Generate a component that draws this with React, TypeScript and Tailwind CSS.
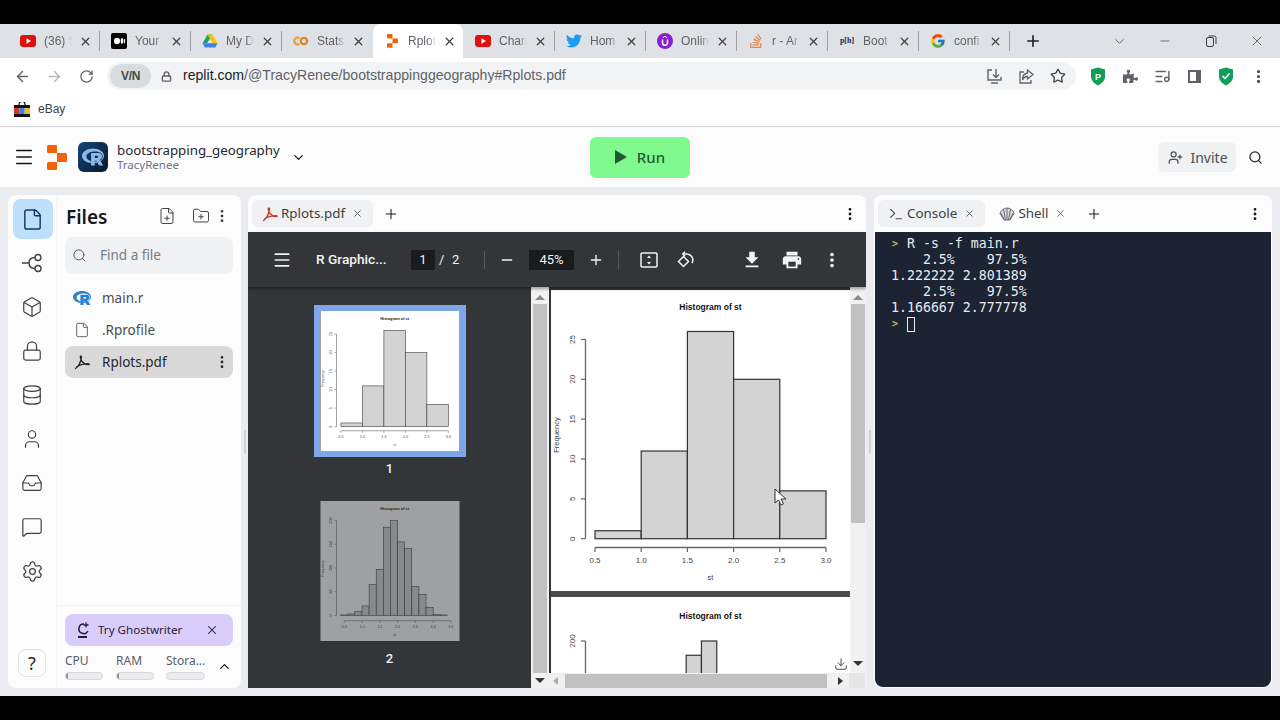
import {
  ArrowLeft,
  ArrowRight,
  Box,
  ChevronDown,
  ChevronUp,
  Database,
  Download,
  EllipsisVertical,
  File,
  FilePlus,
  FolderPlus,
  Inbox,
  ListMusic,
  Lock,
  Menu,
  MessageSquare,
  Minus,
  Plus,
  RotateCw,
  Search,
  Settings,
  Star,
  Terminal,
  User,
  UserPlus,
  X,
} from "lucide-react";
import { FaPuzzlePiece, FaStackOverflow, FaTwitter } from "react-icons/fa";
import { FcGoogle } from "react-icons/fc";
import { MdFileDownload, MdMoreVert, MdPrint } from "react-icons/md";
import { SiR } from "react-icons/si";

const uiFont = { fontFamily: '"Noto Sans", sans-serif' };

function YouTubeIcon() {
  return (
    <svg width="16" height="16" viewBox="0 0 16 16">
      <rect x="0" y="2" width="16" height="12" rx="3" fill="#e01010" />
      <path d="M6.5 5.2 11 8l-4.5 2.8z" fill="#fff" />
    </svg>
  );
}

function MediumIcon() {
  return (
    <svg width="16" height="16" viewBox="0 0 16 16">
      <rect width="16" height="16" rx="2" fill="#000" />
      <ellipse cx="6" cy="8" rx="3" ry="3.2" fill="#fff" />
      <ellipse cx="11" cy="8" rx="1.4" ry="3" fill="#fff" />
      <ellipse cx="13.6" cy="8" rx=".6" ry="2.6" fill="#fff" />
    </svg>
  );
}

function DriveIcon() {
  return (
    <svg width="17" height="16" viewBox="0 0 17 16">
      <path d="M6 1h5l-5.5 9.5H.5z" fill="#1fa463" />
      <path d="M11 1l5.5 9.5h-5L6 1z" fill="#ffc107" />
      <path d="M.5 10.5h16L14 15H3z" fill="#3f7fe8" />
    </svg>
  );
}

function ColabIcon() {
  return (
    <svg width="17" height="16" viewBox="0 0 17 16" fill="none" stroke="#e8a33a" strokeWidth="2.4">
      <path d="M7 5a3.6 3.6 0 1 0 0 6" />
      <circle cx="11.6" cy="8" r="3.4" stroke="#d98a1f" />
    </svg>
  );
}

function ReplitLogo({ size }: { size: number }) {
  return (
    <svg width={size} height={size * 1.25} viewBox="0 0 20 25" fill="#f26207">
      <path d="M0 1.5A1.5 1.5 0 0 1 1.5 0H9a1 1 0 0 1 1 1v7H1.5A1.5 1.5 0 0 1 0 6.500z" />
      <path d="M10 8h8.500A1.500 1.500 0 0 1 20 9.500v6a1.500 1.500 0 0 1-1.500 1.500H10z" />
      <path d="M1.500 17H10v7a1 1 0 0 1-1 1H1.500A1.500 1.500 0 0 1 0 23.500v-5A1.500 1.500 0 0 1 1.500 17z" />
    </svg>
  );
}

function UdemyIcon() {
  return (
    <svg width="16" height="16" viewBox="0 0 16 16">
      <circle cx="8" cy="8" r="8" fill="#8a1fd0" />
      <path d="M5.500 6.500v3.300a2.500 2.500 0 0 0 5 0V6.500" fill="none" stroke="#fff" strokeWidth="1.500" />
      <path d="M5.800 4.800 8 3.200l2.200 1.600" fill="none" stroke="#fff" strokeWidth="1" />
    </svg>
  );
}

function AcrobatIcon({ color, size = 16 }: { color: string; size?: number }) {
  return (
    <svg width={size} height={size} viewBox="0 0 16 16" fill="none" stroke={color} strokeWidth="1.300" strokeLinecap="round">
      <path d="M1.500 14.500C4 13 6.500 8.500 7.500 3.500c.3-1.800-1.200-2-1.200-.6 0 3.500 3 7.300 8.200 7.800.9 0 .9-1-.2-1-3.500-.3-8 1-11.500 2.800" />
    </svg>
  );
}

function ShellIcon() {
  return (
    <svg width="16" height="16" viewBox="0 0 16 16" fill="none" stroke="#6b7076" strokeWidth="1">
      <path d="M5 14h6l4-6.500C14 4 11 2 8 2S2 4 1 7.500z" fill="#d8dadd" />
      <path d="M8 14V2M6.500 14 4.500 3M9.500 14l2-11M5.500 14 1.500 6.500M10.500 14l4-7.500" />
    </svg>
  );
}

function BranchIcon() {
  return (
    <svg width="24" height="24" viewBox="0 0 24 24" fill="none" stroke="#3d4145" strokeWidth="1.400">
      <path d="M2 12h7M9 12c0-3 1-5.500 6-5.500M9 12c0 3 1 5.500 6 5.500" />
      <circle cx="18" cy="6.500" r="3" />
      <circle cx="18" cy="17.500" r="3" />
    </svg>
  );
}

function GhostwriterIcon() {
  return (
    <svg width="16" height="18" viewBox="0 0 16 18" fill="none" stroke="#1f1f3a" strokeWidth="1.500">
      <path d="M9 3a4.800 4.800 0 1 0 4 7" />
      <path d="M11 1.500v5M8.500 4h5" strokeWidth="1.300" />
      <path d="M3 16h9" strokeWidth="2" />
    </svg>
  );
}

function ShieldIcon({ check }: { check?: boolean }) {
  return (
    <svg width="16" height="19" viewBox="0 0 16 19">
      <path d="M8 .5 15 2.500v7c0 4-3 7-7 9-4-2-7-5-7-9v-7z" fill="#0f9d58" />
      {check ? (
        <path d="m4.500 9 2.500 2.500 4.500-5" fill="none" stroke="#fff" strokeWidth="1.600" />
      ) : (
        <text x="8" y="12.500" textAnchor="middle" fontSize="9" fontWeight="700" fill="#fff" fontFamily="Liberation Sans">
          P
        </text>
      )}
    </svg>
  );
}

const chromeTabs = [
  { title: "(36) S", icon: <YouTubeIcon /> },
  { title: "Your", icon: <MediumIcon /> },
  { title: "My D", icon: <DriveIcon /> },
  { title: "Stats", icon: <ColabIcon /> },
  { title: "Rplot", icon: <ReplitLogo size={11} />, active: true },
  { title: "Chan", icon: <YouTubeIcon /> },
  { title: "Hom", icon: <FaTwitter size={16} color="#1d9bf0" /> },
  { title: "Onlin", icon: <UdemyIcon /> },
  { title: "r - Ar", icon: <FaStackOverflow size={16} color="#e8874a" /> },
  {
    title: "Boot",
    icon: (
      <span className="text-[8px] font-bold text-[#1a2a5a]" style={{ fontFamily: '"Liberation Serif", serif' }}>
        p[h]
      </span>
    ),
  },
  { title: "confi", icon: <FcGoogle size={16} /> },
];

function ChromeTab({ title, icon, active, hideSep }: { title: string; icon: React.ReactNode; active?: boolean; hideSep?: boolean }) {
  return (
    <>
      <div className={`flex h-[34px] w-[90px] shrink-0 items-center pl-[11px] ${active ? "rounded-t-lg bg-white" : ""}`}>
        <div className="flex w-4 shrink-0 justify-center">{icon}</div>
        <div className="ml-2 w-[28px] overflow-hidden whitespace-nowrap text-[12px] text-[#5f6368] [mask-image:linear-gradient(to_right,black_70%,transparent)]">
          {title}
        </div>
        <X size={13} strokeWidth={2.2} className="ml-[7px] shrink-0 text-[#3c4043]" />
      </div>
      <div className={`h-5 w-px shrink-0 ${hideSep ? "bg-transparent" : "bg-[#9aa0a6]"}`} />
    </>
  );
}

function ChromeBar() {
  return (
    <div className="flex h-[34px] shrink-0 items-center bg-[#dee1e6] pl-[9px] text-[#3c4043]" style={{ fontFamily: '"Liberation Sans", sans-serif' }}>
      {chromeTabs.map((t, i) => (
        <ChromeTab key={i} title={t.title} icon={t.icon} active={t.active} hideSep={t.active || chromeTabs[i + 1]?.active} />
      ))}
      <Plus size={18} strokeWidth={2.2} className="ml-[14px] text-[#202124]" />
      <ChevronDown size={15} strokeWidth={1.2} className="ml-[70px]" />
      <Minus size={14} strokeWidth={1.2} className="ml-[31px]" />
      <svg width="12" height="12" viewBox="0 0 12 12" fill="none" stroke="#3c4043" className="ml-[33px]">
        <rect x="1.500" y="2.500" width="7" height="9" rx="1.500" />
        <path d="M3.500 1h6a1.500 1.500 0 0 1 1.500 1.500V9" />
      </svg>
      <X size={16} strokeWidth={1.1} className="ml-[32px]" />
    </div>
  );
}

function UrlBar() {
  return (
    <div className="flex h-[34px] shrink-0 items-center bg-white pl-[6px] pt-[2px] text-[#5f6368]">
      <div className="flex w-8 justify-center"><ArrowLeft size={17} /></div>
      <div className="flex w-8 justify-center"><ArrowRight size={17} className="text-[#b4b7bb]" /></div>
      <div className="flex w-8 justify-center"><RotateCw size={15} strokeWidth={2} /></div>
      <div className="ml-[5px] flex h-7 w-[969px] items-center rounded-full bg-[#f1f3f4] pl-[3px] pr-[2px]">
        <div className="flex h-6 w-[41px] items-center justify-center rounded-full bg-[#d9dcdf] text-[12px] font-bold tracking-tight text-[#45494d]" style={{ fontFamily: '"Liberation Sans", sans-serif' }}>
          V/N
        </div>
        <Lock size={11} strokeWidth={3} className="ml-[10px] text-[#5f6368]" />
        <div className="ml-[11px] text-[14.100px]" style={{ fontFamily: '"Liberation Sans", sans-serif' }}>
          <span className="text-[#202124]">replit.com</span>
          <span className="text-[#5f6368]">/@TracyRenee/bootstrappinggeography#Rplots.pdf</span>
        </div>
        <div className="ml-auto flex w-8 justify-center">
          <svg width="17" height="17" viewBox="0 0 17 17" fill="none" stroke="#5f6368" strokeWidth="1.400">
            <path d="M6 2H2v10h13V9M10 1v8M7 6.500 10 9.500l3-3M5 15h7" />
          </svg>
        </div>
        <div className="flex w-8 justify-center">
          <svg width="17" height="17" viewBox="0 0 17 17" fill="none" stroke="#5f6368" strokeWidth="1.300">
            <path d="M6 4H2v11h11v-3M9.500 2l5.500 4.500L9.500 11V8.500C7 8.500 5.500 9.500 4.500 12c0-4 2-6.500 5-7z" />
          </svg>
        </div>
        <div className="flex w-8 justify-center"><Star size={16} className="text-[#45494d]" /></div>
      </div>
      <div className="ml-[6px] flex items-center text-[#5f6368]">
        <div className="flex w-8 justify-center"><ShieldIcon /></div>
        <div className="flex w-8 justify-center"><FaPuzzlePiece size={15} /></div>
        <div className="flex w-8 justify-center"><ListMusic size={17} /></div>
        <div className="flex w-8 justify-center"><div className="h-[13px] w-[13px] border-[2.500px] border-r-[5px] border-[#5f6368]" /></div>
        <div className="flex w-8 justify-center"><ShieldIcon check /></div>
        <div className="flex w-8 justify-center"><EllipsisVertical size={17} strokeWidth={2.500} className="text-[#45494d]" /></div>
      </div>
    </div>
  );
}

function BookmarkBar() {
  return (
    <div className="flex h-[35px] shrink-0 items-center border-b border-[#d4d5d7] bg-white pl-[14px]">
      <svg width="16" height="15" viewBox="0 0 16 15">
        <path d="M5 4V2.500a3 3 0 0 1 6 0V4" fill="none" stroke="#111" strokeWidth="1.200" />
        <rect y="3" width="16" height="3" fill="#111" />
        <rect y="6" width="5.300" height="6" fill="#d3352b" />
        <rect x="5.300" y="6" width="5.400" height="6" fill="#3f7fe8" />
        <rect x="10.700" y="6" width="5.300" height="6" fill="#e0c21c" />
        <rect y="12" width="16" height="3" fill="#111" />
      </svg>
      <span className="ml-2 text-[12px] text-[#3c4043]" style={{ fontFamily: '"Liberation Sans", sans-serif' }}>eBay</span>
    </div>
  );
}

function ReplHeader() {
  return (
    <div className="grid h-[60px] shrink-0 grid-cols-[1fr_auto_1fr] items-center bg-[#fcfcfc] px-4">
      <div className="-ml-px flex items-center">
        <Menu size={22} strokeWidth={1.600} className="-mx-[2px] text-[#14161a]" />
        <div className="ml-[14px]"><ReplitLogo size={20} /></div>
        <div className="ml-[11px] flex h-[30px] w-[30px] items-center justify-center rounded-md bg-gradient-to-br from-[#15477a] to-[#08172b]">
          <SiR size={22} color="#8bb9e8" />
        </div>
        <div className="ml-[9px] flex w-[163px] flex-col whitespace-nowrap">
          <span className="text-[13.300px] leading-[15px] text-[#25282e]">bootstrapping_geography</span>
          <span className="text-[11.500px] leading-[13px] text-[#70757c]">TracyRenee</span>
        </div>
        <ChevronDown size={15} strokeWidth={2} className="ml-[11px] text-[#14161a]" />
      </div>
      <div className="flex h-[41px] w-[100px] items-center justify-center gap-[10px] rounded-md bg-[#80f98f] text-[15px] font-medium text-[#1f5a32]">
        <svg width="12" height="14" viewBox="0 0 12 14" fill="#1f5a32"><path d="M0 0v14l12-7z" /></svg>
        Run
      </div>
      <div className="flex items-center justify-end">
        <div className="flex h-[30px] w-[78px] items-center justify-center gap-[7px] rounded-md bg-[#f0f1f2] pl-[2px] text-[14px] text-[#4a4e55]">
          <UserPlus size={15} />
          Invite
        </div>
        <Search size={15} strokeWidth={2} className="ml-[12px] mr-px text-[#25282e]" />
      </div>
    </div>
  );
}

const railIcons = [
  <BranchIcon />,
  <Box size={22} strokeWidth={1.300} />,
  <Lock size={22} strokeWidth={1.300} />,
  <Database size={22} strokeWidth={1.300} />,
  <User size={22} strokeWidth={1.300} />,
  <Inbox size={22} strokeWidth={1.300} />,
  <MessageSquare size={22} strokeWidth={1.300} />,
  <Settings size={23} strokeWidth={1.300} />,
];

function Meter({ label, width, used }: { label: string; width: string; used?: boolean }) {
  return (
    <div className={`flex flex-col ${width}`}>
      <span className="whitespace-nowrap text-[12px] leading-[16px] text-[#5a5f66]">{label}</span>
      <div className="mt-[3px] h-[8px] w-full overflow-hidden rounded-full border border-[#d6d7da] bg-[#ebecef]">
        {used && <div className="h-full w-[2px] bg-[#8a8d92]" />}
      </div>
    </div>
  );
}

function FilesPanel() {
  return (
    <div className="flex w-[233px] shrink-0 overflow-hidden rounded-lg bg-[#fcfcfc]">
      <div className="flex w-[49px] shrink-0 flex-col items-center gap-1 border-r border-[#f4f4f5] pt-1 text-[#3d4145]">
        <div className="ml-px flex h-10 w-10 items-center justify-center rounded-lg bg-[#bfe0fd]">
          <File size={23} strokeWidth={1.500} className="text-[#0b3b66]" />
        </div>
        {railIcons.map((icon, i) => (
          <div key={i} className="flex h-10 w-10 items-center justify-center">{icon}</div>
        ))}
        <div className="mb-[11px] mt-auto flex h-7 w-7 items-center justify-center rounded-lg border border-[#e2e3e6] text-[18px] text-[#25282e]">?</div>
      </div>
      <div className="flex min-w-0 flex-1 flex-col">
        <div className="flex h-[42px] shrink-0 items-center pl-[9px]">
          <span className="mt-[2px] w-[42px] shrink-0 text-[19px] font-semibold text-[#14161a]">Files</span>
          <FilePlus size={18} strokeWidth={1.300} className="ml-[50px] text-[#3d4145]" />
          <FolderPlus size={18} strokeWidth={1.300} className="ml-[16px] text-[#3d4145]" />
          <EllipsisVertical size={16} strokeWidth={2.200} className="ml-[4px] text-[#3d4145]" />
        </div>
        <div className="mx-2 flex h-[37px] shrink-0 items-center rounded-lg bg-[#f0f1f2] pl-[7px] text-[13.500px] leading-[21px] text-[#777b82]">
          <Search size={15} strokeWidth={1.500} className="text-[#4a4e55]" />
          <span className="ml-[13px]">Find a file</span>
        </div>
        <div className="mx-2 mt-2 flex flex-col text-[13.500px] leading-[21px] text-[#4a4e55]">
          <div className="flex h-8 items-center pl-[8px]">
            <SiR size={18} color="#2a7fd0" />
            <span className="ml-[11px]">main.r</span>
          </div>
          <div className="flex h-8 items-center pl-[9px]">
            <File size={16} strokeWidth={1.300} />
            <span className="ml-[12px]">.Rprofile</span>
          </div>
          <div className="flex h-8 items-center rounded-lg bg-[#d9d9da] pl-[9px] text-[#25282e]">
            <AcrobatIcon color="#25282e" />
            <span className="ml-[12px]">Rplots.pdf</span>
            <EllipsisVertical size={16} strokeWidth={2.200} className="ml-auto mr-[3px]" />
          </div>
        </div>
        <div className="mt-auto border-t border-[#f2f2f3] px-2 pb-2 pt-[8px]">
          <div className="flex h-8 items-center rounded-lg bg-[#d8ccfb] pl-[10px] text-[11.600px] text-[#1f1f3a]">
            <GhostwriterIcon />
            <span className="ml-[7px]">Try Ghostwriter</span>
            <X size={14} strokeWidth={1.800} className="ml-auto mr-[14px]" />
          </div>
          <div className="mt-[7px] flex items-center">
            <Meter label="CPU" width="w-[38px]" used />
            <div className="ml-[13px]"><Meter label="RAM" width="w-[38px]" used /></div>
            <div className="ml-[12px]"><Meter label="Stora..." width="w-[39px]" /></div>
            <ChevronUp size={15} strokeWidth={2} className="ml-[12px] text-[#14161a]" />
          </div>
        </div>
      </div>
    </div>
  );
}

type HistogramProps = {
  bars: number[][];
  xTicks: string[];
  yTicks: number[];
  xOf: (v: number) => number;
  yOf: (v: number) => number;
  className?: string;
};

function Histogram({ bars, xTicks, yTicks, xOf, yOf, className }: HistogramProps) {
  const xFirst = xOf(Number(xTicks[0]));
  const xLast = xOf(Number(xTicks[xTicks.length - 1]));
  const y0 = yOf(yTicks[0]);
  const yMax = yOf(yTicks[yTicks.length - 1]);
  return (
    <svg viewBox="0 0 299 301" className={className} fontFamily="Liberation Sans" fill="#444">
      <rect width="299" height="301" fill="#fff" />
      <text x="159.500" y="19.500" textAnchor="middle" fontSize="8.500" fontWeight="700" fill="#111">Histogram of st</text>
      {bars.map(([a, b, n]) => (
        <rect key={a} x={xOf(a)} y={yOf(n)} width={xOf(b) - xOf(a)} height={y0 - yOf(n)} fill="#d3d3d3" stroke="#333" strokeWidth="1.200" />
      ))}
      <path d={`M34.500 ${y0}V${yMax}`} stroke="#666" strokeWidth="1.300" fill="none" />
      {yTicks.map((t) => (
        <g key={t}>
          <path d={`M30 ${yOf(t)}H34.500`} stroke="#666" strokeWidth="1.200" />
          <text x="24" y={yOf(t)} fontSize="8" textAnchor="middle" transform={`rotate(-90 24 ${yOf(t)})`}>{t}</text>
        </g>
      ))}
      <text x="8" y="145" fontSize="7.500" textAnchor="middle" transform="rotate(-90 8 145)">Frequency</text>
      <path d={`M${xFirst} 257.500H${xLast}`} stroke="#666" strokeWidth="1.300" fill="none" />
      {xTicks.map((t) => (
        <g key={t}>
          <path d={`M${xOf(Number(t))} 257.500V262`} stroke="#666" strokeWidth="1.200" />
          <text x={xOf(Number(t))} y="273" fontSize="8" textAnchor="middle">{t}</text>
        </g>
      ))}
      <text x="159.500" y="290" fontSize="7.500" textAnchor="middle">st</text>
    </svg>
  );
}

const page1 = {
  bars: [[0.5, 1, 1], [1, 1.5, 11], [1.5, 2, 26], [2, 2.5, 20], [2.5, 3, 6]],
  xTicks: ["0.5", "1.0", "1.5", "2.0", "2.5", "3.0"],
  yTicks: [0, 5, 10, 15, 20, 25],
  xOf: (v: number) => 44 + (v - 0.5) * 92.4,
  yOf: (v: number) => 248.7 - v * 7.97,
};

const page2Counts = [1, 3, 8, 20, 65, 97, 186, 200, 155, 141, 61, 44, 17, 2, 1];
const page2 = {
  bars: page2Counts.map((n, i) => [0.4 + i * 0.2, 0.6 + i * 0.2, n]),
  xTicks: ["0.5", "1.0", "1.5", "2.0", "2.5", "3.0", "3.5"],
  yTicks: [0, 50, 100, 150, 200],
  xOf: (v: number) => 51 + (v - 0.5) * 76.5,
  yOf: (v: number) => 246 - v * 1.02,
};

function UpArrow() {
  return <div className="h-0 w-0 border-x-[5px] border-b-[5px] border-x-transparent border-b-[#8a8a8a]" />;
}

function DownArrow({ dark }: { dark?: boolean }) {
  return <div className={`h-0 w-0 border-x-[5px] border-t-[5px] border-x-transparent ${dark ? "border-t-[#333]" : "border-t-[#8a8a8a]"}`} />;
}

function PdfToolbar() {
  return (
    <div className="z-10 flex h-[55px] shrink-0 items-center bg-[#323639] pl-[25px] text-[#f1f3f4] shadow-[0_2px_3px_rgba(0,0,0,.35)]" style={{ fontFamily: "Roboto, sans-serif" }}>
      <Menu size={20} strokeWidth={2} className="-mx-px" />
      <span className="ml-[25px] w-[95px] text-[13.700px] font-medium">R Graphic...</span>
      <div className="flex h-5 w-6 items-center justify-center bg-[#191b1c] text-[13px]">1</div>
      <span className="ml-[4px] w-[6px] text-[13px]">/</span>
      <span className="ml-[7px] w-[8px] text-[13px]">2</span>
      <div className="ml-[24px] h-[18px] w-px bg-[#55595c]" />
      <Minus size={16} strokeWidth={2} className="ml-[14px]" />
      <div className="ml-[14px] flex h-5 w-[45px] items-center justify-center bg-[#191b1c] text-[13px]">45%</div>
      <Plus size={16} strokeWidth={2} className="ml-[14px]" />
      <div className="ml-[14px] h-[18px] w-px bg-[#55595c]" />
      <svg width="18" height="16" viewBox="0 0 18 16" fill="none" stroke="#f1f3f4" strokeWidth="1.500" className="ml-[21px]">
        <rect x="1" y="1" width="16" height="14" rx="1" />
        <path d="M9 3.500 7 6h4zM9 12.500 7 10h4z" fill="#f1f3f4" stroke="none" />
      </svg>
      <svg width="18" height="18" viewBox="0 0 18 18" fill="none" stroke="#f1f3f4" strokeWidth="1.500" className="ml-[18px]">
        <path d="M7.500 5.500 2.500 10.500l5 5 5-5z" />
        <path d="M7 3h3.500a6 6 0 0 1 5.500 9" />
        <path d="M9 .8 6.800 3 9 5.200" />
      </svg>
      <MdFileDownload size={22} className="ml-[47px]" />
      <MdPrint size={22} className="ml-[18px]" />
      <MdMoreVert size={22} className="ml-[18px]" />
    </div>
  );
}

function ThumbSidebar() {
  return (
    <div className="flex w-[283px] shrink-0 flex-col items-center bg-[#323639] pt-[18px] text-[13px] font-medium text-[#f1f3f4]" style={{ fontFamily: "Roboto, sans-serif" }}>
      <div className="border-[6px] border-[#7fa6e8]">
        <Histogram {...page1} className="h-[140px] w-[140px]" />
      </div>
      <span className="mt-1 leading-4">1</span>
      <div className="mt-[24px] opacity-[.53]">
        <Histogram {...page2} className="h-[140px] w-[140px]" />
      </div>
      <span className="mt-[10px] leading-4">2</span>
    </div>
  );
}

function PdfViewer() {
  return (
    <div className="flex min-h-0 flex-1 flex-col">
      <PdfToolbar />
      <div className="flex min-h-0 flex-1">
        <ThumbSidebar />
        <div className="flex w-[18px] shrink-0 flex-col items-center bg-[#f1f1f1] pt-[3px]">
          <div className="flex h-[14px] items-center"><UpArrow /></div>
          <div className="w-[14px] flex-1 bg-[#c1c1c1]" />
          <div className="flex h-[15px] items-center"><DownArrow dark /></div>
        </div>
        <div className="flex min-w-0 flex-1 flex-col">
          <div className="flex min-h-0 flex-1">
            <div className="flex min-w-0 flex-1 flex-col overflow-hidden bg-[#323639] pl-[2px] pt-[3px]">
              <Histogram {...page1} className="h-[301px] w-[299px] shrink-0" />
              <div className="h-[6px] shrink-0 bg-[#4a4c4e]" />
              <div className="shrink-0 bg-white pt-[2px]">
                <Histogram {...page2} className="h-[301px] w-[299px]" />
              </div>
            </div>
            <div className="flex w-4 shrink-0 flex-col items-center bg-[#f1f1f1] pt-[3px]">
              <div className="flex h-[14px] items-center"><UpArrow /></div>
              <div className="h-[219px] w-[14px] bg-[#c1c1c1]" />
              <div className="mt-auto flex h-[20px] items-center"><DownArrow dark /></div>
            </div>
          </div>
          <div className="flex h-[15px] shrink-0 items-center bg-[#f1f1f1]">
            <div className="ml-[4px] h-0 w-0 border-y-[4px] border-r-[5px] border-y-transparent border-r-[#aaa]" />
            <div className="ml-[7px] h-[14px] w-[262px] bg-[#c1c1c1]" />
            <div className="ml-[11px] h-0 w-0 border-y-[4px] border-l-[5px] border-y-transparent border-l-[#333]" />
            <div className="ml-[6px] h-full w-[16px] bg-[#e6e6e6]" />
          </div>
        </div>
      </div>
      <Download size={14} strokeWidth={1.500} className="absolute left-[834px] top-[657px] text-[#333]" />
      <svg width="14" height="18" viewBox="0 0 14 18" className="absolute left-[774px] top-[488px]">
        <path d="M1 1v14l3.500-3 2.500 5 2.500-1.200-2.500-4.800H12z" fill="#fff" stroke="#333" strokeWidth="1" />
      </svg>
    </div>
  );
}

function PaneTab({ icon, label, active }: { icon: React.ReactNode; label: string; active?: boolean }) {
  return (
    <div className={`flex h-[27px] items-center rounded-md px-[10px] text-[13.400px] text-[#3d4145] ${active ? "bg-[#f0f1f2]" : ""}`}>
      {icon}
      <span className="ml-[3px]">{label}</span>
      <X size={11} strokeWidth={1.800} className="ml-[7px] text-[#4a4e55]" />
    </div>
  );
}

function EditorPanel() {
  return (
    <div className="flex w-[618px] shrink-0 flex-col overflow-hidden rounded-t-lg bg-[#fcfcfc]">
      <div className="flex h-[37px] shrink-0 items-center pl-1 pr-2">
        <PaneTab icon={<AcrobatIcon color="#c0392b" />} label="Rplots.pdf" active />
        <Plus size={16} strokeWidth={1.500} className="ml-[10px] text-[#14161a]" />
        <EllipsisVertical size={16} strokeWidth={2.200} className="ml-auto text-[#14161a]" />
      </div>
      <PdfViewer />
    </div>
  );
}

function ConsolePanel() {
  return (
    <div className="flex w-[398px] shrink-0 flex-col overflow-hidden rounded-lg bg-[#fcfcfc] px-px pb-px">
      <div className="flex h-[37px] shrink-0 items-center pl-[3px] pr-[8px]">
        <PaneTab icon={<Terminal size={16} strokeWidth={1.600} />} label="Console" active />
        <div className="ml-[4px]"><PaneTab icon={<ShellIcon />} label="Shell" /></div>
        <Plus size={16} strokeWidth={1.500} className="ml-[10px] text-[#14161a]" />
        <EllipsisVertical size={16} strokeWidth={2.200} className="ml-auto text-[#14161a]" />
      </div>
      <div className="flex-1 whitespace-pre rounded-b-lg bg-[#1c2333] pl-[16px] pt-[4px] text-[13.250px] leading-4 text-[#e8ebf0]" style={{ fontFamily: '"DejaVu Sans Mono", monospace' }}>
        <div className="flex">
          <span className="w-4 pl-[1px] text-[10px] font-bold text-[#c8b04a]">&gt;</span>
          <span>R -s -f main.r</span>
        </div>
        <div>{"    2.5%    97.5%"}</div>
        <div>1.222222 2.801389</div>
        <div>{"    2.5%    97.5%"}</div>
        <div>1.166667 2.777778</div>
        <div className="flex items-center">
          <span className="w-4 pl-[1px] text-[10px] font-bold text-[#c8b04a]">&gt;</span>
          <span className="h-[15px] w-[8px] border border-[#e8ebf0]" />
        </div>
      </div>
    </div>
  );
}

function Gutter({ width }: { width: string }) {
  return (
    <div className={`flex shrink-0 items-center justify-center ${width}`}>
      <div className="h-6 w-[2px] rounded-full bg-[#d0d1d4]" />
    </div>
  );
}

export default function App() {
  return (
    <div className="relative flex h-[720px] w-[1280px] flex-col overflow-hidden bg-black" style={uiFont}>
      <div className="h-6 shrink-0" />
      <ChromeBar />
      <UrlBar />
      <BookmarkBar />
      <ReplHeader />
      <div className="flex min-h-0 flex-1 bg-[#ebecef] px-2 py-2">
        <FilesPanel />
        <Gutter width="w-[7px]" />
        <EditorPanel />
        <Gutter width="w-[8px]" />
        <ConsolePanel />
      </div>
      <div className="h-6 shrink-0" />
    </div>
  );
}
